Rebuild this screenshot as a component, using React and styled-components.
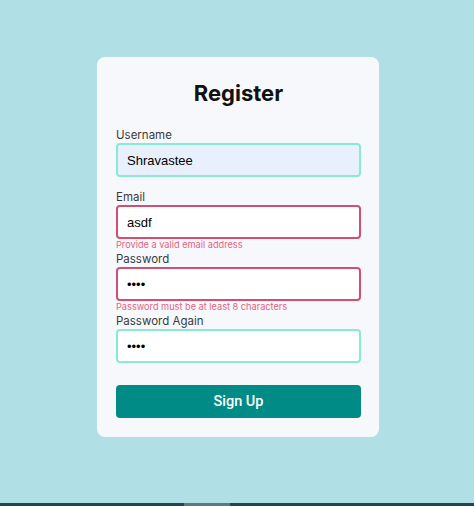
import React, { useState } from "react";
import styled, { createGlobalStyle } from "styled-components";

const GlobalStyle = createGlobalStyle`
  * { box-sizing: border-box; }
  body {
    margin: 0;
    background: #b0e0e6;
    font-family: "Inter", "Noto Sans", sans-serif;
  }
`;

const Page = styled.div`
  height: 503px;
  padding: 57px 0 0 97px;
`;

const Card = styled.form`
  width: 282px;
  background: #f6f8fc;
  border-radius: 8px;
  padding: 22px 18px 19px 19px;
`;

const Title = styled.h2`
  margin: 0 0 20px;
  text-align: center;
  font-size: 22px;
  line-height: 28px;
  font-weight: 700;
  color: #111;
`;

const Field = styled.div`
  display: flex;
  flex-direction: column;
`;

const Label = styled.label`
  font-size: 11.5px;
  line-height: 16px;
  color: #3a3a3a;
`;

const Input = styled.input`
  height: 34px;
  width: 100%;
  padding: 0 9px;
  border: 2px solid ${(p) => (p.$invalid ? "#d24f72" : "#86ebd2")};
  border-radius: 4px;
  background: ${(p) => (p.$filled ? "#e8f0fe" : "#fff")};
  font-family: "Liberation Sans", Arial, sans-serif;
  font-size: 13px;
  color: #000;
  outline: none;
`;

const Error = styled.span`
  height: 12px;
  font-size: 9.2px;
  line-height: 12px;
  color: #e2647f;
`;

const Button = styled.button`
  margin-top: 10px;
  width: 100%;
  height: 33px;
  border: none;
  border-radius: 4px;
  background: #008b86;
  color: #fff;
  font-family: "Roboto", "Liberation Sans", sans-serif;
  font-size: 14.5px;
  font-weight: 500;
  cursor: pointer;
`;

const Taskbar = styled.div`
  height: 3px;
  background: #21474c;
  display: flex;
  padding-left: 184px;
`;

const TaskItem = styled.div`
  width: 46px;
  background: #5a7a7d;
`;

const fields = [
  { name: "username", label: "Username", type: "text", filled: true },
  { name: "email", label: "Email", type: "text", error: "Provide a valid email address" },
  { name: "password", label: "Password", type: "password", error: "Password must be at least 8 characters" },
  { name: "confirm", label: "Password Again", type: "password" },
];

export default function App() {
  const [values, setValues] = useState({
    username: "Shravastee",
    email: "asdf",
    password: "asdf",
    confirm: "asdf",
  });

  const handleChange = (e) => {
    const { name, value } = e.target;
    setValues((prev) => ({ ...prev, [name]: value }));
  };

  return (
    <>
      <GlobalStyle />
      <Page>
        <Card onSubmit={(e) => e.preventDefault()}>
          <Title>Register</Title>
          {fields.map((f) => (
            <Field key={f.name}>
              <Label htmlFor={f.name}>{f.label}</Label>
              <Input
                id={f.name}
                name={f.name}
                type={f.type}
                value={values[f.name]}
                onChange={handleChange}
                $invalid={!!f.error}
                $filled={f.filled}
              />
              <Error>{f.error}</Error>
            </Field>
          ))}
          <Button type="submit">Sign Up</Button>
        </Card>
      </Page>
      <Taskbar>
        <TaskItem />
      </Taskbar>
    </>
  );
}
